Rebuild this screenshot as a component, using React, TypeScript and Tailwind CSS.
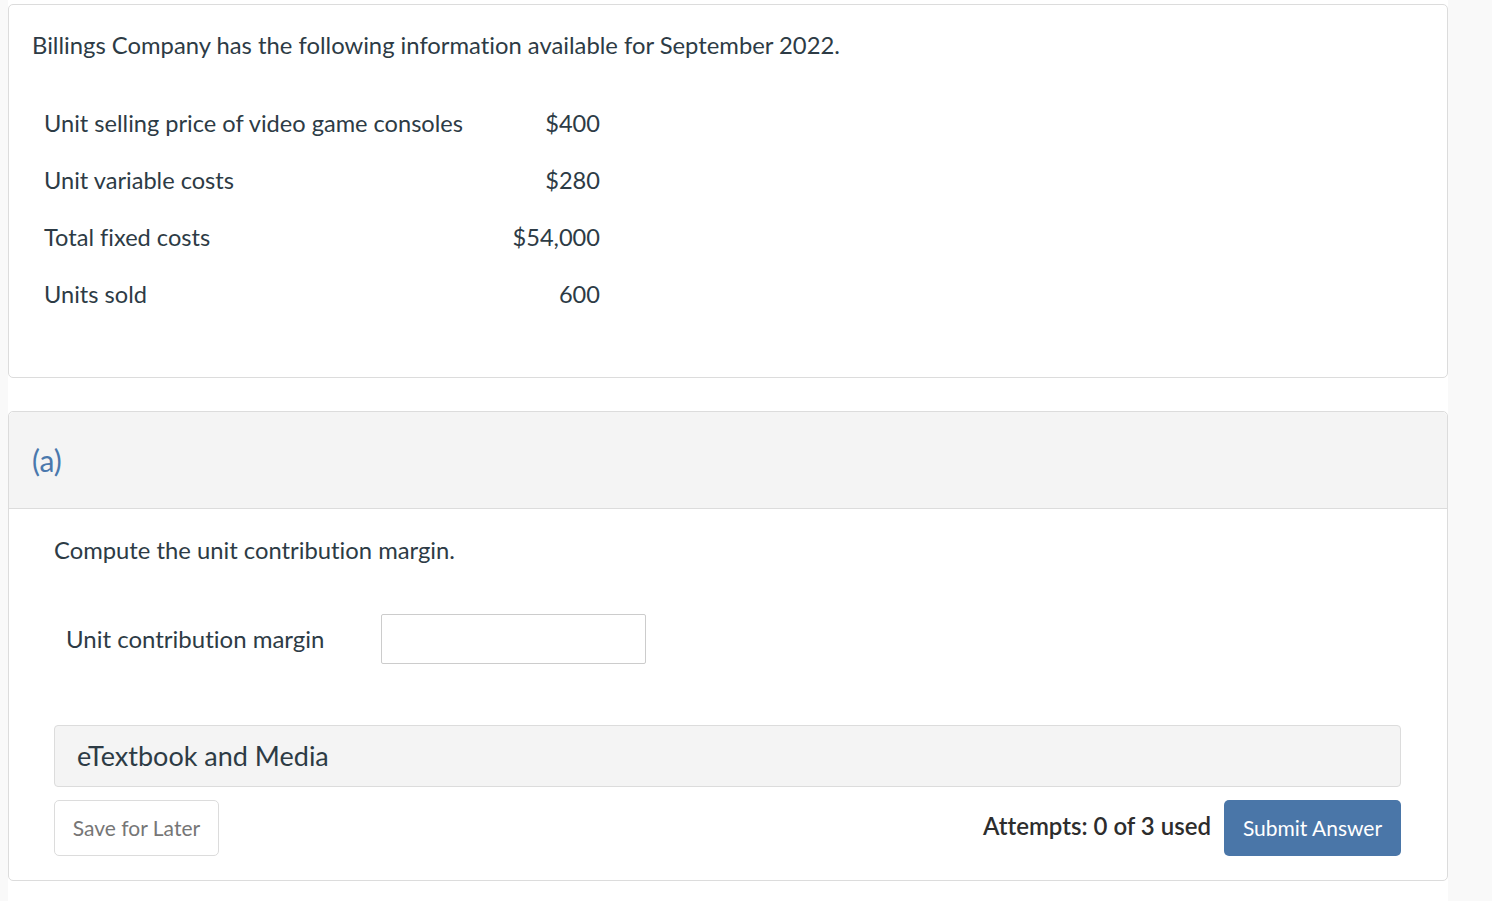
import React from 'react';

// Dados do enunciado
const ROWS = [
  { label: 'Unit selling price of video game consoles', value: '$400' },
  { label: 'Unit variable costs', value: '$280' },
  { label: 'Total fixed costs', value: '$54,000' },
  { label: 'Units sold', value: '600' },
];

export default function App() {
  return (
    <div
      className="flex min-h-[901px] w-full bg-[#f9f9f9] text-[#2d3b45] [font-variant-ligatures:none]"
      style={{ fontFamily: 'Lato, "Open Sans", sans-serif' }}
    >
      <div className="w-[8px] shrink-0" />
      <div className="w-[1440px] shrink-0 bg-white pt-[4px]">
        {/* Card do enunciado */}
        <div className="h-[374px] rounded-[5px] border border-[#dcdcdc] px-[23px] pt-[26px]">
          <p className="text-[23.8px] leading-[28px]">
            Billings Company has the following information available for September 2022.
          </p>
          <div className="mt-[36px] ml-[12px] text-[23.6px]">
            {ROWS.map((r) => (
              <div key={r.label} className="grid h-[57px] grid-cols-[456px_100px] items-center">
                <span>{r.label}</span>
                <span className="text-right">{r.value}</span>
              </div>
            ))}
          </div>
        </div>

        <div className="h-[33px]" />

        {/* Parte (a) */}
        <div className="h-[470px] rounded-[5px] border border-[#dcdcdc]">
          <div className="flex h-[97px] items-center rounded-t-[5px] border-b border-[#dcdcdc] bg-[#f4f4f4] px-[23px]">
            <span className="text-[30px] text-[#4a78ad]">(a)</span>
          </div>
          <div className="px-[45px] pt-[27px]">
            <p className="text-[23.8px] leading-[28px]">Compute the unit contribution margin.</p>
            <div className="mt-[50px] flex items-center pl-[12px]">
              <span className="w-[315px] text-[24px]">Unit contribution margin</span>
              <input
                type="text"
                className="h-[50px] w-[265px] rounded-[2px] border border-[#cccccc] bg-white px-2 text-[20px] outline-none"
              />
            </div>
            <div className="mt-[61px] flex h-[62px] w-[1347px] items-center rounded-[4px] border border-[#dcdcdc] bg-[#f4f4f4] px-[22px]">
              <span className="text-[27px]">eTextbook and Media</span>
            </div>
            <div className="mt-[13px] flex w-[1347px] items-center justify-between">
              <button className="h-[56px] w-[165px] rounded-[5px] border border-[#dcdcdc] bg-white text-[21px] text-[#767676]">
                Save for Later
              </button>
              <div className="flex items-center gap-[13px]">
                <span className="mb-[4px] text-[24px] font-semibold text-[#2d2d2d]">Attempts: 0 of 3 used</span>
                <button className="h-[56px] w-[177px] rounded-[5px] bg-[#4a76a8] text-[21px] text-white">
                  Submit Answer
                </button>
              </div>
            </div>
          </div>
        </div>
      </div>
    </div>
  );
}
